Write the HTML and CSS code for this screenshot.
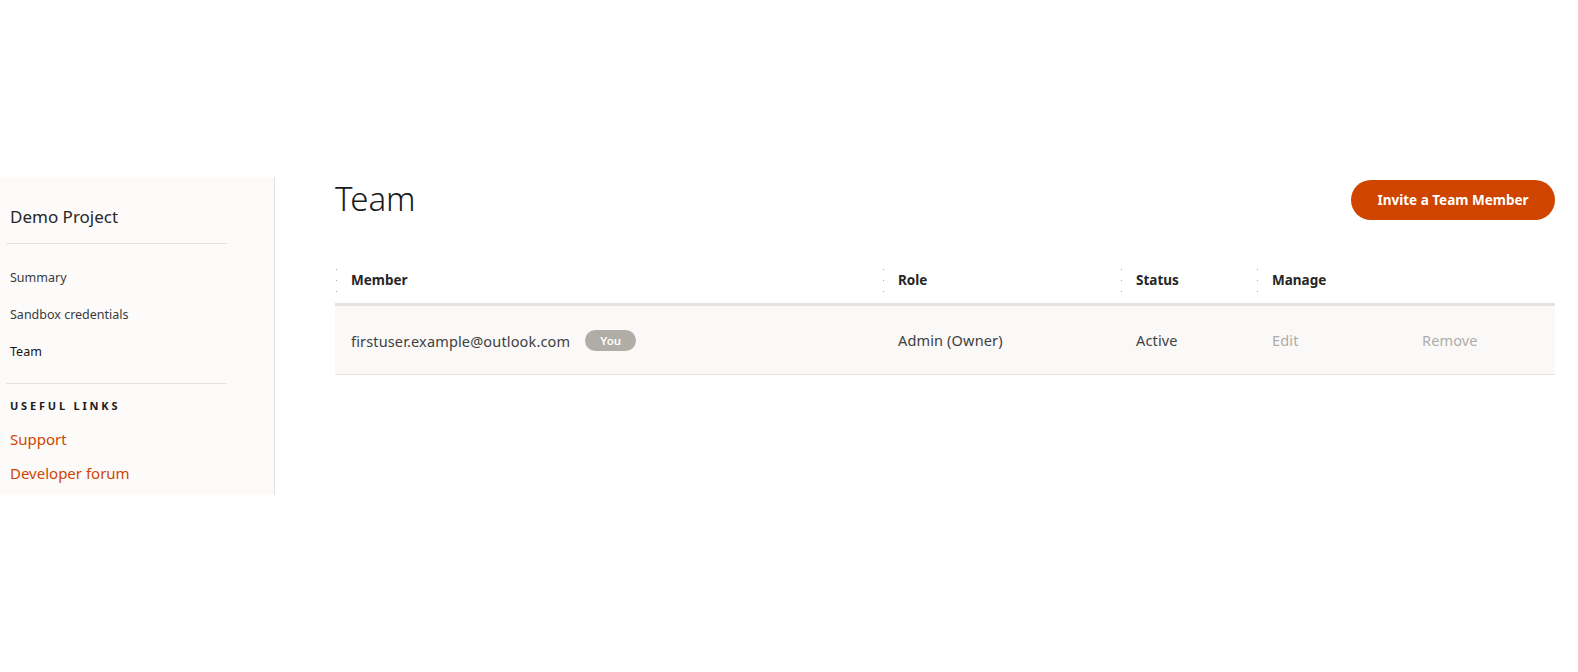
FILE: index.html
```html
<!DOCTYPE html>
<html lang="en">
<head>
<meta charset="utf-8">
<title>Team</title>
<link rel="stylesheet" href="styles.css">
</head>
<body>
<div class="layout">
  <aside class="sidebar">
    <div class="project">Demo Project</div>
    <nav class="nav">
      <a class="nav-item">Summary</a>
      <a class="nav-item">Sandbox credentials</a>
      <a class="nav-item active">Team</a>
    </nav>
    <div class="links">
      <div class="links-title">USEFUL LINKS</div>
      <a class="link">Support</a>
      <a class="link">Developer forum</a>
    </div>
  </aside>
  <main class="main">
    <div class="main-header">
      <h1 class="title">Team</h1>
      <button class="btn">Invite a Team Member</button>
    </div>
    <table class="team-table">
      <colgroup>
        <col class="c-member"><col class="c-role"><col class="c-status"><col class="c-edit"><col class="c-remove">
      </colgroup>
      <thead>
        <tr>
          <th class="th">Member</th>
          <th class="th">Role</th>
          <th class="th">Status</th>
          <th class="th" colspan="2">Manage</th>
        </tr>
      </thead>
      <tbody>
        <tr class="row">
          <td class="td"><span class="email">firstuser.example@outlook.com</span><span class="badge">You</span></td>
          <td class="td">Admin (Owner)</td>
          <td class="td">Active</td>
          <td class="td muted">Edit</td>
          <td class="td muted">Remove</td>
        </tr>
      </tbody>
    </table>
  </main>
</div>
</body>
</html>
```
FILE: styles.css
```css
* { box-sizing: border-box; }
html, body { margin: 0; padding: 0; background: #fff; }
body {
  font-family: "Noto Sans", "Liberation Sans", sans-serif;
  color: #141413;
}
.layout {
  display: flex;
  align-items: flex-start;
  margin-top: 177px;
}
.sidebar {
  width: 275px;
  flex: none;
  height: 318px;
  background: #fcfbfa;
  border-right: 1px solid #e2e1e0;
  padding: 0 47px 0 6px;
}
.project {
  font-size: 17px;
  color: #262626;
  padding: 28px 0 0 4px;
  height: 67px;
  line-height: 24px;
  border-bottom: 1px solid #e6e4e1;
}
.nav {
  display: flex;
  flex-direction: column;
  padding-top: 15px;
  padding-bottom: 13px;
  border-bottom: 1px solid #e6e4e1;
}
.nav-item {
  font-size: 12.5px;
  color: #3a3a3a;
  line-height: 37px;
  padding-left: 4px;
}
.nav-item.active { color: #141413; }
.links {
  display: flex;
  flex-direction: column;
  padding: 12px 0 0 4px;
}
.links-title {
  font-size: 11px;
  font-weight: 700;
  letter-spacing: 2.8px;
  color: #1c1c1c;
  line-height: 20px;
  margin-bottom: 6px;
}
.link {
  font-size: 15px;
  color: #cf4500;
  line-height: 34px;
}
.main {
  flex: 1;
  padding: 0 23px 0 60px;
}
.main-header {
  display: flex;
  justify-content: space-between;
  align-items: flex-start;
  height: 46px;
}
.title {
  margin: 0;
  font-size: 33px;
  font-weight: 300;
  line-height: 40px;
  color: #1a1a1a;
  margin-top: 2px;
}
.btn {
  height: 40px;
  width: 204px;
  border: none;
  border-radius: 20px;
  background: #cf4500;
  color: #fff;
  font-family: inherit;
  font-size: 13.5px;
  font-weight: 700;
  margin-top: 3px;
}
.team-table {
  width: 100%;
  margin-top: 34px;
  border-collapse: collapse;
  table-layout: fixed;
}
.c-member { width: 547px; }
.c-role { width: 238px; }
.c-status { width: 136px; }
.c-edit { width: 150px; }
.th {
  position: relative;
  text-align: left;
  font-size: 13.5px;
  font-weight: 700;
  color: #262626;
  padding: 13px 16px;
  line-height: 20px;
  border-bottom: 3px solid #e6e3de;
}
.th::before {
  content: "";
  position: absolute;
  left: 1px;
  top: 12px;
  width: 1px;
  height: 23px;
  background: repeating-linear-gradient(to bottom, #a8a8a8 0 1px, transparent 1px 11px);
}
.row { background: #faf9f7; }
.td {
  height: 70px;
  padding: 0 16px;
  font-size: 14.5px;
  letter-spacing: 0.15px;
  color: #404040;
  border-bottom: 1px solid #e6e3de;
  vertical-align: middle;
}
.td.muted { color: #aeaca9; }
.email { vertical-align: middle; }
.badge {
  display: inline-block;
  vertical-align: middle;
  margin-left: 15px;
  width: 51px;
  height: 21px;
  line-height: 21px;
  border-radius: 11px;
  background: #b0aca6;
  color: #fff;
  font-size: 11.5px;
  font-weight: 600;
  letter-spacing: 0;
  text-align: center;
}
```
